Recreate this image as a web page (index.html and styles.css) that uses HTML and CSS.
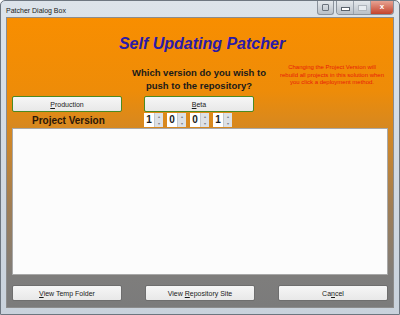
FILE: index.html
```html
<!DOCTYPE html>
<html lang="en">
<head>
  <meta charset="UTF-8">
  <title>Patcher Dialog Box</title>
  <link rel="stylesheet" href="styles.css">
</head>
<body>

  <div class="window">
    <div class="titlebar">
      <span class="title">Patcher Dialog Box</span>
      <div class="caption-buttons">
        <span class="cap-help"><i></i></span>
        <div class="cap-group">
          <span class="cap-min"><i></i></span>
          <span class="cap-max"><i></i></span>
          <span class="cap-close">x</span>
        </div>
      </div>
    </div>

    <div class="client">
      <h1 class="heading">Self Updating Patcher</h1>

      <div class="top-row">
        <div class="question">Which version do you wish to<br>push to the repository?</div>
        <div class="warning">Changing the Project Version will<br>rebuild all projects in this solution when<br>you click a deployment method.</div>
      </div>

      <div class="choice-row">
        <button class="btn btn-green"><u>P</u>roduction</button>
        <button class="btn btn-green"><u>B</u>eta</button>
      </div>

      <div class="version-row">
        <div class="version-label">Project Version</div>
        <div class="spinners">
          <div class="spin"><span class="num">1</span><span class="arrows"><i>&#9652;</i><i>&#9662;</i></span></div>
          <div class="spin"><span class="num">0</span><span class="arrows"><i>&#9652;</i><i>&#9662;</i></span></div>
          <div class="spin"><span class="num">0</span><span class="arrows"><i>&#9652;</i><i>&#9662;</i></span></div>
          <div class="spin"><span class="num">1</span><span class="arrows"><i>&#9652;</i><i>&#9662;</i></span></div>
        </div>
      </div>

      <div class="output"></div>

      <div class="bottom-row">
        <button class="btn"><u>V</u>iew Temp Folder</button>
        <button class="btn">View <u>R</u>epository Site</button>
        <button class="btn">Ca<u>n</u>cel</button>
      </div>
    </div>
  </div>

</body>
</html>
```

FILE: styles.css
```css
body {
  margin: 0;
  font-family: 'Liberation Sans', Arial, sans-serif;
  background-color: #ffffff;
}

.window {
  width: 400px;
  height: 315px;
  box-sizing: border-box;
  background: linear-gradient(#dce3ea, #c9d2dc);
  border: 1px solid #6d7680;
  border-radius: 5px 5px 0 0;
  padding: 0 5px 6px 5px;
  display: flex;
  flex-direction: column;
}

.titlebar {
  height: 16px;
  display: flex;
  align-items: center;
  justify-content: space-between;
}

.title {
  font-size: 7px;
  color: #1a1a1a;
  margin-top: 2px;
}

.caption-buttons {
  display: flex;
  align-items: flex-start;
  height: 16px;
  gap: 2px;
}

.cap-help {
  width: 15px;
  height: 13px;
  border: 1px solid #8a929c;
  border-top: none;
  border-radius: 0 0 3px 3px;
  background: linear-gradient(#e4e8ec, #b9c0c8);
  display: flex;
  align-items: center;
  justify-content: center;
}

.cap-help i {
  width: 5px;
  height: 5px;
  border: 1px solid #6a727c;
  border-radius: 1px;
}

.cap-group {
  display: flex;
  border: 1px solid #8a929c;
  border-top: none;
  border-radius: 0 0 4px 4px;
  overflow: hidden;
  height: 13px;
}

.cap-min, .cap-max {
  width: 16px;
  display: flex;
  align-items: center;
  justify-content: center;
  background: linear-gradient(#e4e8ec, #b9c0c8);
  border-right: 1px solid #9aa2ac;
}

.cap-min i {
  width: 7px;
  height: 2px;
  margin-top: 3px;
  background: #ffffff;
  border: 1px solid #5a626c;
}

.cap-max i {
  width: 7px;
  height: 4px;
  border: 1px solid #b0b6bd;
  background: #e8ecf0;
}

.cap-close {
  width: 22px;
  background: linear-gradient(#e7a393, #c4432c);
  color: #ffffff;
  font-size: 8px;
  font-weight: bold;
  text-align: center;
  line-height: 12px;
}

.client {
  flex: 1;
  border: 1px solid #8c8c8c;
  background: linear-gradient(#f88e00 0%, #ee8c08 25%, #c9862e 45%, #a07e55 65%, #7e7d7c 90%, #7b7b7b 100%);
  padding: 0 5px 0 5px;
  display: flex;
  flex-direction: column;
}

.heading {
  margin: 17px 0 0 0;
  text-align: center;
  font-size: 16px;
  font-style: italic;
  font-weight: bold;
  color: #2b1aa8;
  padding-left: 4px;
}

.top-row {
  display: flex;
  margin-top: 9px;
  height: 34px;
}

.question {
  width: 264px;
  flex-shrink: 0;
  text-align: center;
  font-size: 9.5px;
  font-weight: bold;
  color: #1a1a1a;
  line-height: 13px;
  margin-top: 4px;
  padding-left: 110px;
  box-sizing: border-box;
  white-space: nowrap;
}

.warning {
  flex: 1;
  text-align: center;
  font-size: 6px;
  line-height: 7.5px;
  color: #e8200a;
  margin-top: 2px;
  white-space: nowrap;
}

.choice-row {
  display: flex;
  gap: 22px;
}

.btn {
  width: 110px;
  height: 16px;
  padding: 0;
  font-family: 'Liberation Sans', Arial, sans-serif;
  font-size: 7px;
  color: #1a1a1a;
  background: linear-gradient(#f6f6f6, #e8e8e8);
  border: 1px solid #6e6e6e;
  border-radius: 2px;
}

.btn-green {
  border-color: #4c8a22;
}

.version-row {
  display: flex;
  align-items: center;
  height: 16px;
}

.version-label {
  width: 132px;
  padding-left: 20px;
  box-sizing: border-box;
  font-size: 10px;
  font-weight: bold;
  color: #2a1608;
}

.spinners {
  display: flex;
  gap: 4px;
}

.spin {
  display: flex;
  width: 19px;
  height: 14px;
  background: #ffffff;
}

.num {
  width: 10px;
  font-size: 10px;
  font-weight: bold;
  line-height: 14px;
  text-align: center;
  color: #1a1a1a;
}

.arrows {
  width: 8px;
  display: flex;
  flex-direction: column;
  background: #dde1e6;
  border-left: 1px solid #c4c9ce;
}

.arrows i {
  flex: 1;
  font-style: normal;
  font-size: 4px;
  line-height: 7px;
  text-align: center;
  color: #7a8088;
}

.output {
  height: 147px;
  background: #fcfcfc;
  border: 1px solid #a8a8a8;
  box-sizing: border-box;
}

.bottom-row {
  display: flex;
  justify-content: space-between;
  margin-top: 10px;
}
```
